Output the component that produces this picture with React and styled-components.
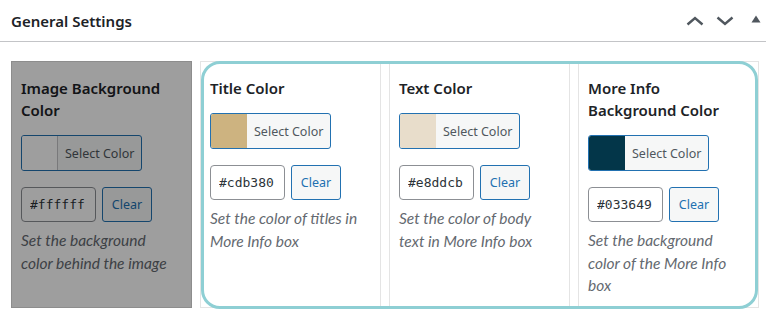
import React from "react";
import styled, { createGlobalStyle } from "styled-components";

const GlobalStyle = createGlobalStyle`
  html, body {
    margin: 0;
    padding: 0;
    background: #ffffff;
  }
  body {
    font-family: "Noto Sans", "Open Sans", sans-serif;
    color: #1d2327;
  }
`;

const Page = styled.div`
  width: 768px;
  height: 313px;
  overflow: hidden;
  background: #ffffff;
`;

const Header = styled.div`
  height: 41px;
  display: flex;
  align-items: center;
  justify-content: space-between;
  padding: 0 5px 0 11px;
  border-bottom: 1px solid #c3c4c7;
  margin-right: 2px;
`;

const Heading = styled.h2`
  margin: 0;
  font-size: 15px;
  font-weight: 600;
  color: #1d2327;
`;

const Actions = styled.div`
  display: flex;
  align-items: center;
`;

const ActionIcon = styled.svg`
  display: block;
  color: #50575e;
  margin-left: ${(p) => p.$gap || 0}px;
  margin-top: ${(p) => p.$lift || 0}px;
`;

const Body = styled.div`
  display: flex;
  gap: 8px;
  padding: 19px 0 0 11px;
`;

const Group = styled.div`
  position: relative;
  display: flex;
  gap: 8px;

  &::after {
    content: "";
    position: absolute;
    left: 1px;
    top: 0;
    right: 1px;
    bottom: -1px;
    border: 3px solid #8ecfd4;
    border-radius: 19px;
    pointer-events: none;
  }
`;

const Column = styled.div`
  position: relative;
  width: 181px;
  height: 247px;
  box-sizing: border-box;
  border: 1px solid #e4e4e4;
  padding: 15px 9px 0 9px;
  background: #ffffff;

  &::after {
    content: "";
    position: absolute;
    inset: -1px;
    background: ${(p) => (p.$dimmed ? "rgba(0, 0, 0, 0.38)" : "transparent")};
    pointer-events: none;
  }
`;

const Title = styled.h3`
  margin: 0 0 14px 0;
  font-size: 15px;
  font-weight: 600;
  line-height: 22px;
  color: #1d2327;
`;

const PickerButton = styled.button`
  display: flex;
  align-items: stretch;
  height: 36px;
  padding: 0;
  border: 1px solid #2271b1;
  border-radius: 3px;
  background: #f6f7f7;
  overflow: hidden;
  cursor: pointer;
  font-family: "Noto Sans", "Open Sans", sans-serif;
`;

const Swatch = styled.span`
  width: 35px;
  background: ${(p) => p.$color};
  border-right: 1px solid ${(p) => (p.$color === "#ffffff" ? "#c3c4c7" : p.$color)};
`;

const PickerLabel = styled.span`
  display: flex;
  align-items: center;
  padding: 0 7px 0 7px;
  font-size: 12.5px;
  color: #50575e;
`;

const InputRow = styled.div`
  display: flex;
  gap: 6px;
  margin-top: 16px;
`;

const HexInput = styled.input`
  width: 75px;
  height: 35px;
  box-sizing: border-box;
  border: 1px solid #8c8f94;
  border-radius: 4px;
  padding: 0 8px;
  font-family: "DejaVu Sans Mono", "Liberation Mono", monospace;
  font-size: 13px;
  color: #2c3338;
  background: #ffffff;
`;

const ClearButton = styled.button`
  width: 50px;
  height: 35px;
  border: 1px solid #2271b1;
  border-radius: 3px;
  background: #f6f7f7;
  color: #2271b1;
  font-family: "Noto Sans", "Open Sans", sans-serif;
  font-size: 12.5px;
  padding: 0;
  cursor: pointer;
`;

const Description = styled.p`
  margin: 7px 0 0 0;
  max-width: 155px;
  font-family: Lato, "Open Sans", sans-serif;
  font-style: italic;
  font-size: 15.5px;
  line-height: 22.5px;
  color: #646970;
`;

const settings = [
  {
    title: "Image Background Color",
    color: "#ffffff",
    hint: "Set the background color behind the image",
    dimmed: true,
  },
  {
    title: "Title Color",
    color: "#cdb380",
    hint: "Set the color of titles in More Info box",
  },
  {
    title: "Text Color",
    color: "#e8ddcb",
    hint: "Set the color of body text in More Info box",
  },
  {
    title: "More Info Background Color",
    color: "#033649",
    hint: "Set the background color of the More Info box",
  },
];

const titleLines = {
  "Image Background Color": ["Image Background", "Color"],
  "More Info Background Color": ["More Info", "Background Color"],
};

function ColorSetting({ title, color, hint, dimmed }) {
  const lines = titleLines[title] || [title];
  return (
    <Column $dimmed={dimmed}>
      <Title>
        {lines.map((line, i) => (
          <React.Fragment key={i}>
            {i > 0 && <br />}
            {line}
          </React.Fragment>
        ))}
      </Title>
      <PickerButton type="button">
        <Swatch $color={color} />
        <PickerLabel>Select Color</PickerLabel>
      </PickerButton>
      <InputRow>
        <HexInput readOnly value={color} />
        <ClearButton type="button">Clear</ClearButton>
      </InputRow>
      <Description>{hint}</Description>
    </Column>
  );
}

export default function App() {
  const [first, ...rest] = settings;
  return (
    <Page>
      <GlobalStyle />
      <Header>
        <Heading>General Settings</Heading>
        <Actions>
          <ActionIcon width="18" height="10" viewBox="0 0 18 10">
            <path d="M1.5 8.5 L9 2 L16.5 8.5" fill="none" stroke="currentColor" strokeWidth="2.4" />
          </ActionIcon>
          <ActionIcon width="18" height="10" viewBox="0 0 18 10" $gap={12}>
            <path d="M1.5 1.5 L9 8 L16.5 1.5" fill="none" stroke="currentColor" strokeWidth="2.4" />
          </ActionIcon>
          <ActionIcon width="10" height="8" viewBox="0 0 10 8" $gap={17} $lift={-3}>
            <path d="M0.5 7.5 L5 0.5 L9.5 7.5 Z" fill="currentColor" />
          </ActionIcon>
        </Actions>
      </Header>
      <Body>
        <ColorSetting {...first} />
        <Group>
          {rest.map((s) => (
            <ColorSetting key={s.title} {...s} />
          ))}
        </Group>
      </Body>
    </Page>
  );
}
